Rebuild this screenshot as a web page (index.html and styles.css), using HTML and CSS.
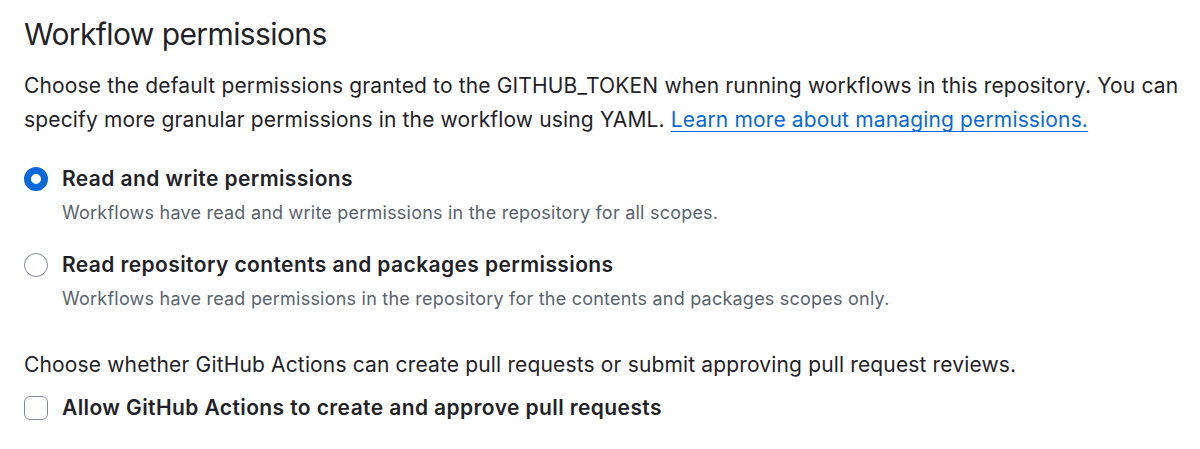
FILE: index.html
```html
<!DOCTYPE html>
<html>
<head>
<meta charset="utf-8">
<link rel="stylesheet" href="styles.css">
</head>
<body>
<div class="page">
  <h2 class="title">Workflow permissions</h2>
  <p class="lead">Choose the default permissions granted to the GITHUB_TOKEN when running workflows in this repository. You can specify more granular permissions in the workflow using YAML. <a href="#" class="link">Learn more about managing permissions.</a></p>

  <div class="options">
    <label class="option">
      <span class="radio radio-checked"></span>
      <span class="option-body">
        <span class="option-label">Read and write permissions</span>
        <span class="option-note">Workflows have read and write permissions in the repository for all scopes.</span>
      </span>
    </label>
    <label class="option">
      <span class="radio"></span>
      <span class="option-body">
        <span class="option-label">Read repository contents and packages permissions</span>
        <span class="option-note">Workflows have read permissions in the repository for the contents and packages scopes only.</span>
      </span>
    </label>
  </div>

  <p class="lead lead-second">Choose whether GitHub Actions can create pull requests or submit approving pull request reviews.</p>
  <label class="check-option">
    <span class="checkbox"></span>
    <span class="option-label">Allow GitHub Actions to create and approve pull requests</span>
  </label>
</div>
</body>
</html>
```

FILE: styles.css
```css
html, body {
  margin: 0;
  padding: 0;
  background: #ffffff;
}
body {
  font-family: Inter, "Liberation Sans", Arial, sans-serif;
  color: #1f2328;
}
.page {
  padding: 14px 8px 0 24px;
}
.title {
  margin: 0;
  font-size: 30px;
  font-weight: 400;
  letter-spacing: -0.6px;
  line-height: 40px;
  color: #1f2328;
}
.lead {
  margin: 15px 0 0 0;
  font-size: 21px;
  letter-spacing: 0.15px;
  line-height: 34px;
  color: #1f2328;
}
.link {
  color: #0969da;
  text-decoration: underline;
  text-underline-offset: 4px;
  text-decoration-thickness: 1px;
}
.options {
  display: flex;
  flex-direction: column;
  gap: 20px;
  margin-top: 25px;
}
.option {
  display: flex;
  align-items: flex-start;
  gap: 14px;
}
.radio {
  flex: none;
  box-sizing: border-box;
  width: 24px;
  height: 24px;
  margin-top: 5px;
  border-radius: 50%;
  border: 1.5px solid #818b98;
  background: #fff;
}
.radio-checked {
  border: 7px solid #0969da;
}
.option-body {
  display: flex;
  flex-direction: column;
}
.option-label {
  font-size: 21px;
  font-weight: 600;
  letter-spacing: 0.4px;
  line-height: 34px;
  color: #1f2328;
}
.option-note {
  margin-top: 2px;
  font-size: 18px;
  letter-spacing: 0.22px;
  line-height: 30px;
  color: #59636e;
}
.lead-second {
  margin-top: 34px;
}
.check-option {
  display: flex;
  align-items: flex-start;
  gap: 14px;
  margin-top: 9px;
}
.checkbox {
  flex: none;
  box-sizing: border-box;
  width: 24px;
  height: 24px;
  margin-top: 5px;
  border-radius: 6px;
  border: 1.5px solid #818b98;
  background: #fff;
}
```
